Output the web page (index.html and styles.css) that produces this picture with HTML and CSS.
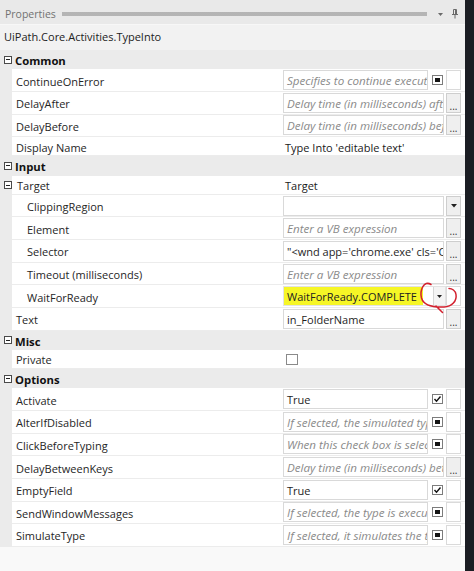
FILE: index.html
```html
<!DOCTYPE html>
<html lang="en">

<head>
	<meta charset="UTF-8">
	<title>Properties</title>
	<link rel="stylesheet" href="styles.css">
</head>

<body>
	<div class="panel">
		<div class="titlebar">
			<span class="title">Properties</span>
			<span class="grip"></span>
			<svg class="tb-icon" width="7" height="6" viewBox="0 0 7 6"><path d="M1 2h5L3.5 5z" fill="#6a6a6a"/></svg>
			<svg class="tb-icon pin" width="8" height="11" viewBox="0 0 8 11"><path d="M2.5 1.5h3v5h-3zM4.5 1.5v5M1 6.5h6M4 6.5v4" fill="none" stroke="#6a6a6a"/></svg>
		</div>
		<div class="typename">UiPath.Core.Activities.TypeInto</div>

		<div class="rows">
			<div class="cat"><span class="gut"><i class="toggle"></i></span><span class="label">Common</span></div>

			<div class="prop">
				<span class="gut"></span>
				<div class="body">
					<div class="name">ContinueOnError</div>
					<div class="value"><div class="field ph">Specifies to continue executing the remaining activities</div><span class="chk mixed"></span><span class="blank"></span></div>
				</div>
			</div>
			<div class="prop">
				<span class="gut"></span>
				<div class="body">
					<div class="name">DelayAfter</div>
					<div class="value"><div class="field ph">Delay time (in milliseconds) after</div><span class="btn dots">...</span></div>
				</div>
			</div>
			<div class="prop">
				<span class="gut"></span>
				<div class="body">
					<div class="name">DelayBefore</div>
					<div class="value"><div class="field ph">Delay time (in milliseconds) before</div><span class="btn dots">...</span></div>
				</div>
			</div>
			<div class="prop plain">
				<span class="gut"></span>
				<div class="body">
					<div class="name">Display Name</div>
					<div class="value text">Type Into 'editable text'</div>
				</div>
			</div>

			<div class="cat"><span class="gut"><i class="toggle"></i></span><span class="label">Input</span></div>

			<div class="prop plain">
				<span class="gut"><i class="toggle"></i></span>
				<div class="body">
					<div class="name group">Target</div>
					<div class="value text">Target</div>
				</div>
			</div>
			<div class="prop">
				<span class="gut"></span>
				<div class="body">
					<div class="name sub">ClippingRegion</div>
					<div class="value"><div class="field"></div><span class="btn dd"><svg width="6" height="4" viewBox="0 0 6 4"><path d="M0 0h6L3 3.5z" fill="#222"/></svg></span></div>
				</div>
			</div>
			<div class="prop">
				<span class="gut"></span>
				<div class="body">
					<div class="name sub">Element</div>
					<div class="value"><div class="field ph">Enter a VB expression</div><span class="btn dots">...</span></div>
				</div>
			</div>
			<div class="prop">
				<span class="gut"></span>
				<div class="body">
					<div class="name sub">Selector</div>
					<div class="value"><div class="field">"&lt;wnd app='chrome.exe' cls='Chrome_WidgetWin_1' /&gt;"</div><span class="btn dots">...</span></div>
				</div>
			</div>
			<div class="prop">
				<span class="gut"></span>
				<div class="body">
					<div class="name sub">Timeout (milliseconds)</div>
					<div class="value"><div class="field ph">Enter a VB expression</div><span class="btn dots">...</span></div>
				</div>
			</div>
			<div class="prop">
				<span class="gut"></span>
				<div class="body">
					<div class="name sub">WaitForReady</div>
					<div class="value">
						<div class="field combo"><span class="hl">WaitForReady.COMPLETE</span><span class="mini-dd"><svg width="5" height="3" viewBox="0 0 5 3"><path d="M0 0h5L2.5 3z" fill="#222"/></svg></span></div>
						<span class="blank"></span>
					</div>
				</div>
			</div>
			<div class="prop">
				<span class="gut"></span>
				<div class="body">
					<div class="name">Text</div>
					<div class="value"><div class="field">in_FolderName</div><span class="btn dots">...</span></div>
				</div>
			</div>

			<div class="cat"><span class="gut"><i class="toggle"></i></span><span class="label">Misc</span></div>

			<div class="prop plain">
				<span class="gut"></span>
				<div class="body">
					<div class="name">Private</div>
					<div class="value text"><span class="chk empty"></span></div>
				</div>
			</div>

			<div class="cat"><span class="gut"><i class="toggle"></i></span><span class="label">Options</span></div>

			<div class="prop">
				<span class="gut"></span>
				<div class="body">
					<div class="name">Activate</div>
					<div class="value"><div class="field">True</div><span class="chk on"><svg width="9" height="8" viewBox="0 0 9 8"><path d="M1.5 4l2 2.2L7.5 1.5" fill="none" stroke="#111" stroke-width="1.4"/></svg></span><span class="blank"></span></div>
				</div>
			</div>
			<div class="prop">
				<span class="gut"></span>
				<div class="body">
					<div class="name">AlterIfDisabled</div>
					<div class="value"><div class="field ph">If selected, the simulated type is executed</div><span class="chk mixed"></span><span class="blank"></span></div>
				</div>
			</div>
			<div class="prop">
				<span class="gut"></span>
				<div class="body">
					<div class="name">ClickBeforeTyping</div>
					<div class="value"><div class="field ph">When this check box is selected</div><span class="chk mixed"></span><span class="blank"></span></div>
				</div>
			</div>
			<div class="prop">
				<span class="gut"></span>
				<div class="body">
					<div class="name">DelayBetweenKeys</div>
					<div class="value"><div class="field ph">Delay time (in milliseconds) between</div><span class="btn dots">...</span></div>
				</div>
			</div>
			<div class="prop">
				<span class="gut"></span>
				<div class="body">
					<div class="name">EmptyField</div>
					<div class="value"><div class="field">True</div><span class="chk on"><svg width="9" height="8" viewBox="0 0 9 8"><path d="M1.5 4l2 2.2L7.5 1.5" fill="none" stroke="#111" stroke-width="1.4"/></svg></span><span class="blank"></span></div>
				</div>
			</div>
			<div class="prop">
				<span class="gut"></span>
				<div class="body">
					<div class="name">SendWindowMessages</div>
					<div class="value"><div class="field ph">If selected, the type is executed</div><span class="chk mixed"></span><span class="blank"></span></div>
				</div>
			</div>
			<div class="prop">
				<span class="gut"></span>
				<div class="body">
					<div class="name">SimulateType</div>
					<div class="value"><div class="field ph">If selected, it simulates the type</div><span class="chk mixed"></span><span class="blank"></span></div>
				</div>
			</div>
		</div>
	</div>
	<div class="edge"></div>

	<!-- hand drawn red mark around the dropdown -->
	<svg class="scribble" width="474" height="571" viewBox="0 0 474 571">
		<path d="M431 284.5C424 280 419.5 290 421.5 298C423.5 305 432 307.5 444 307C452 306.5 457 301 456 294.5C455.5 290.5 452 288.5 449 288.5M436 306L442.5 312.5" fill="none" stroke="#d3202e" stroke-width="1.5" stroke-linecap="round"/>
	</svg>
</body>

</html>
```

FILE: styles.css
```css
* {
	box-sizing: border-box;
}

body {
	margin: 0;
	width: 474px;
	height: 571px;
	overflow: hidden;
	display: flex;
	position: relative;
	background-color: #1b1d23;
	font-family: "Open Sans", "Liberation Sans", sans-serif;
	font-size: 11px;
	color: #1e1e1e;
}

.panel {
	width: 465px;
	height: 571px;
	flex: none;
	display: flex;
	flex-direction: column;
	background-color: #f9f9f9;
}

.edge {
	flex: 1;
	background-color: #1b1d23;
}

.titlebar {
	height: 25px;
	flex: none;
	display: flex;
	align-items: center;
	padding: 3px 6px 0 5px;
	background-color: #e9e9e9;
	border-bottom: 1px solid #f7f7f7;
	color: #727272;
	font-size: 10.5px;
}

.grip {
	flex: 1;
	height: 4px;
	margin: 0 6px 0 6px;
	background-image: radial-gradient(circle, #b3b3b3 0.7px, transparent 0.9px);
	background-size: 2px 2px;
}

.tb-icon {
	margin-left: 4px;
}

.tb-icon.pin {
	margin-left: 7px;
}

.typename {
	height: 25px;
	flex: none;
	display: flex;
	align-items: center;
	padding: 0 0 3px 4px;
	background-color: #f2f2f2;
	color: #222;
}

.rows {
	display: flex;
	flex-direction: column;
}

.cat {
	height: 19.2px;
	display: flex;
	align-items: center;
	background-color: #ebebeb;
	font-weight: 700;
	font-size: 11.3px;
	color: #111;
}

.cat .gut {
	margin-right: 3px;
}

.label {
	padding-top: 2px;
}

.gut {
	width: 12px;
	height: 100%;
	flex: none;
	display: flex;
	align-items: center;
	padding-left: 4px;
	background-color: #ebebeb;
}

.toggle {
	width: 8px;
	height: 8px;
	flex: none;
	position: relative;
	border: 1px solid #4a4a4a;
	background-color: #fff;
}

.toggle::after {
	content: "";
	position: absolute;
	left: 1px;
	right: 1px;
	top: 2.5px;
	height: 1px;
	background-color: #222;
}

.prop {
	height: 22.67px;
	display: flex;
}

.prop.plain {
	height: 19.2px;
}

.body {
	flex: 1;
	min-width: 0;
	display: flex;
	align-items: center;
	padding-right: 4px;
	background-color: #fff;
	border-bottom: 1px solid #ececec;
}

.name {
	width: 271px;
	flex: none;
	padding: 2px 0 0 4px;
	white-space: nowrap;
	color: #262626;
}

.name.sub {
	padding-left: 15px;
}

.name.group {
	padding-left: 5px;
}

.value {
	flex: 1;
	min-width: 0;
	display: flex;
	align-items: center;
}

.value.text {
	padding: 2px 0 0 2px;
	color: #1a1a1a;
}

.field {
	flex: 1;
	width: 0;
	min-width: 0;
	height: 20px;
	display: flex;
	align-items: center;
	padding: 1px 3px 0;
	overflow: hidden;
	white-space: nowrap;
	background-color: #fff;
	border: 1px solid #d9d9d9;
	color: #1e1e1e;
}

.field.ph {
	font-style: italic;
	font-size: 11.6px;
	color: #8a8a8a;
}

.field.combo {
	padding: 0;
	border-color: #e2e2e2;
}

.hl {
	flex: 1;
	height: 18px;
	display: flex;
	align-items: center;
	padding: 1px 0 0 3px;
	background-color: #f6f626;
	color: #222;
}

.mini-dd {
	width: 12px;
	height: 18px;
	flex: none;
	display: flex;
	align-items: center;
	justify-content: center;
	margin-left: 10px;
	background-color: #f4f4f4;
	border-left: 1px solid #d6d6d6;
}

.btn {
	width: 15px;
	height: 20px;
	flex: none;
	margin-left: 2px;
	display: flex;
	justify-content: center;
	background-color: #efefef;
	border: 1px solid #cecece;
}

.btn.dots {
	align-items: flex-end;
	font-size: 10px;
	line-height: 11px;
	color: #333;
}

.btn.dd {
	align-items: center;
}

.chk {
	width: 11px;
	height: 10px;
	flex: none;
	margin: 0 3px 0 4px;
	position: relative;
	display: flex;
	align-items: center;
	justify-content: center;
	background-color: #fff;
	border: 1px solid #7c7c7c;
}

.chk.mixed::after {
	content: "";
	position: absolute;
	left: 2px;
	right: 2px;
	top: 2px;
	bottom: 2px;
	background-color: #151515;
}

.chk.empty {
	width: 12px;
	height: 11px;
	margin: 0 0 0 1px;
	border-color: #8a8a8a;
}

.blank {
	width: 15px;
	height: 20px;
	flex: none;
	background-color: #fff;
	border: 1px solid #dadada;
}

.scribble {
	position: absolute;
	left: 0;
	top: 0;
	pointer-events: none;
}
```
